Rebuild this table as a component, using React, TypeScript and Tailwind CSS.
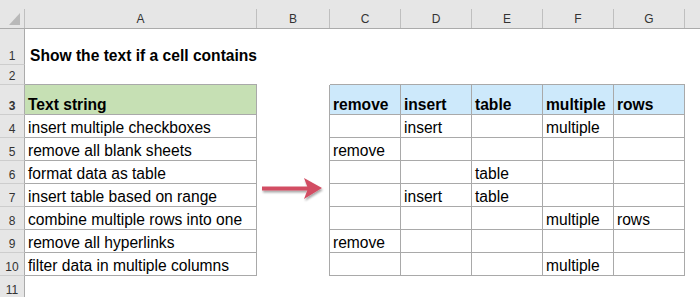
import React from "react";

const font = "font-['Liberation_Sans',Arial,sans-serif]";

// column widths include the 1px right border
const colW = ["w-[232px]", "w-[73px]", "w-[71px]", "w-[71px]", "w-[71px]", "w-[71px]", "w-[71px]"];
const letters = ["A", "B", "C", "D", "E", "F", "G"];

const heads = ["remove", "insert", "table", "multiple", "rows"];

const data: string[][] = [
  ["insert multiple checkboxes", "", "insert", "", "multiple", ""],
  ["remove all blank sheets", "remove", "", "", "", ""],
  ["format data as table", "", "", "table", "", ""],
  ["insert table based on range", "", "insert", "table", "", ""],
  ["combine multiple rows into one", "", "", "", "multiple", "rows"],
  ["remove all hyperlinks", "remove", "", "", "", ""],
  ["filter data in multiple columns", "", "", "", "multiple", ""],
];

function RowNum({ n }: { n: number }) {
  return (
    <div className="w-[25px] shrink-0 flex items-end justify-center pb-[1px] bg-[#e6e6e6] border-r border-b border-r-[#ababab] border-b-[#cdcdcd] text-[12px] leading-[14px] text-[#333]">
      {n}
    </div>
  );
}

function Cell({ w, extra = "", children }: { w: string; extra?: string; children?: React.ReactNode }) {
  return (
    <div className={`${w} shrink-0 flex items-end pl-[3px] pb-[1px] leading-[17px] whitespace-nowrap ${extra}`}>
      {children}
    </div>
  );
}

function ColHeader() {
  return (
    <div className="flex h-[29px] bg-[#e6e6e6] border-b border-[#ababab] text-[12px] text-[#333]">
      <div className="w-[25px] shrink-0 flex flex-col">
        <div className="h-[9px]" />
        <div className="flex-1 border-r border-[#bfbfbf] relative">
          <svg width="24" height="19" className="absolute left-0 top-0">
            <polygon points="9,16 20,4 20,16" fill="#b9b9b9" />
          </svg>
        </div>
      </div>
      {letters.map((l, i) => (
        <div key={l} className={`${colW[i]} shrink-0 flex flex-col`}>
          <div className="h-[9px]" />
          <div className="flex-1 border-r border-[#bfbfbf] flex items-center justify-center pt-[1px]">{l}</div>
        </div>
      ))}
      <div className="flex-1" />
    </div>
  );
}

const tb = "border-r border-b border-[#a9a9a9]";

export default function App() {
  return (
    <div className={`relative w-[700px] h-[297px] overflow-hidden bg-white text-black ${font}`}>
      <ColHeader />

      {/* row 1 - title */}
      <div className="flex h-[36px] text-[15.6px]">
        <RowNum n={1} />
        <Cell w={colW[0]} extra="font-bold pl-[5px]">Show the text if a cell contains</Cell>
      </div>

      {/* row 2 - blank, tops of the tables */}
      <div className="flex h-[20px]">
        <RowNum n={2} />
        <div className={`${colW[0]} shrink-0 border-b border-[#a9a9a9]`} />
        <div className={`${colW[1]} shrink-0`} />
        {heads.map((h) => (
          <div key={h} className="w-[71px] shrink-0 border-b border-[#a9a9a9]" />
        ))}
      </div>

      {/* row 3 - headers */}
      <div className="flex h-[30px] text-[15.6px] font-bold">
        <RowNum n={3} />
        <Cell w={colW[0]} extra={`${tb} bg-[#c6e0b4]`}>Text string</Cell>
        <Cell w={colW[1]} extra="border-r border-[#a9a9a9]" />
        {heads.map((h) => (
          <Cell key={h} w="w-[71px]" extra={`${tb} bg-[#cde9fb]`}>
            {h}
          </Cell>
        ))}
      </div>

      {/* rows 4-10 */}
      {data.map((r, i) => (
        <div key={i} className="flex h-[23px] text-[15.6px]">
          <RowNum n={i + 4} />
          <Cell w={colW[0]} extra={tb}>{r[0]}</Cell>
          <Cell w={colW[1]} extra="border-r border-[#a9a9a9]" />
          {r.slice(1).map((v, j) => (
            <Cell key={j} w="w-[71px]" extra={tb}>
              {v}
            </Cell>
          ))}
        </div>
      ))}

      <div className="flex h-[23px]">
        <RowNum n={11} />
      </div>

      {/* arrow */}
      <svg className="absolute left-[260px] top-[174px]" width="68" height="30" viewBox="0 0 68 30">
        <defs>
          <filter id="sh" x="-20%" y="-40%" width="140%" height="180%">
            <feGaussianBlur in="SourceAlpha" stdDeviation="1.2" />
            <feOffset dx="1" dy="2" result="b" />
            <feComponentTransfer>
              <feFuncA type="linear" slope="0.35" />
            </feComponentTransfer>
            <feMerge>
              <feMergeNode />
              <feMergeNode in="SourceGraphic" />
            </feMerge>
          </filter>
        </defs>
        <g filter="url(#sh)" fill="#d24e63">
          <rect x="2" y="12.5" width="46" height="4" />
          <polygon points="44,4 62,14 44,25 48,14.5" />
        </g>
      </svg>
    </div>
  );
}
